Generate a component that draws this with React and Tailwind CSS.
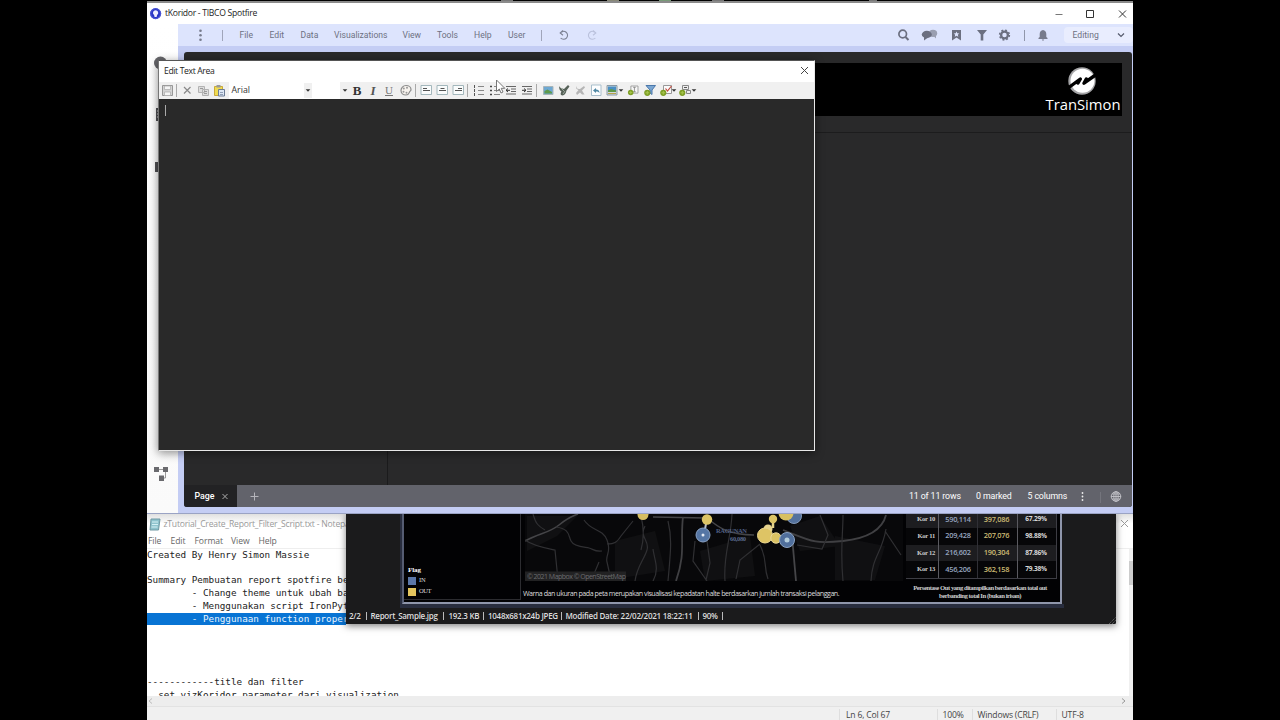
import React from "react";

const UI = "font-['Open_Sans','Noto_Sans',sans-serif]";
const ROBOTO = "font-['Roboto',sans-serif]";

function Icon({ w = 16, h = 16, className = "", children }) {
  return (
    <svg width={w} height={h} viewBox={`0 0 ${w} ${h}`} className={`shrink-0 ${className}`} fill="none">
      {children}
    </svg>
  );
}

function TitleBar() {
  return (
    <div className={`flex h-[21px] shrink-0 items-center bg-white text-[#222] ${UI}`}>
      <Icon w={18} h={18}>
        <circle cx="8.600" cy="8.600" r="5.600" fill="#2a35c4" />
        <circle cx="8.600" cy="8.600" r="4.900" stroke="#5b66dc" strokeWidth=".8" />
        <path d="M8.600 5.200a2.700 2.700 0 0 1 1.500 4.900l-.5 1.900h-2l-.5-1.900a2.700 2.700 0 0 1 1.500-4.900z" fill="#eef" />
      </Icon>
      <span className="w-[300px] text-[8.600px] leading-none tracking-[-0.280px] whitespace-nowrap">tKoridor - TIBCO Spotfire</span>
      <div className="ml-auto flex items-center">
        <Icon w={32} h={12}><path d="M8.500 6.500h7" stroke="#777" /></Icon>
        <Icon w={32} h={12}><path d="M7.500 2.500h7v7h-7z" stroke="#333" /></Icon>
        <Icon w={22} h={12}><path d="M8 2.500l7 7M15 2.500l-7 7" stroke="#333" /></Icon>
      </div>
    </div>
  );
}

const menu = [
  ["File", "w-[30px]"],
  ["Edit", "w-[31px]"],
  ["Data", "w-[33.500px]"],
  ["Visualizations", "w-[68.500px]"],
  ["View", "w-[34.500px]"],
  ["Tools", "w-[37px]"],
  ["Help", "w-[34px]"],
  ["User", "w-[31.500px]"],
];

function MenuBar() {
  return (
    <div className={`flex h-[22px] shrink-0 items-center bg-[#dde4fd] text-[#6d7182] ${ROBOTO}`}>
      <Icon w={61.500} h={22}>
        <g fill="#777b8c">
          <circle cx="22.500" cy="6.800" r="1.300" />
          <circle cx="22.500" cy="11.300" r="1.300" />
          <circle cx="22.500" cy="15.800" r="1.300" />
        </g>
        <path d="M44.500 6v11" stroke="#a0a5ba" />
      </Icon>
      <div className="flex text-[8.600px] leading-none">
        {menu.map(([t, w]) => (
          <span key={t} className={`${w} whitespace-nowrap`}>{t}</span>
        ))}
      </div>
      <Icon w={70} h={22}>
        <path d="M1.500 6v11" stroke="#a0a5ba" />
        <path d="M20.300 9a4 4 0 1 1 .3 5M23 6.500l-2.800 2.500 2.800 2.200" stroke="#7b8092" strokeWidth="1.100" />
        <path d="M55.700 9a4 4 0 1 0-.3 5M53 6.500l2.800 2.500-2.800 2.200" stroke="#bac1dc" strokeWidth="1.100" />
      </Icon>
      <div className="ml-auto flex items-center">
        <Icon w={166} h={22}>
          <g transform="translate(-1 -.5)">
            <circle cx="5.700" cy="10.500" r="3.800" stroke="#6b6f80" strokeWidth="1.700" />
            <path d="M8.500 13.500l3 3" stroke="#6b6f80" strokeWidth="1.900" />
            <ellipse cx="36" cy="9.800" rx="4.200" ry="3.600" fill="#9a9fb1" />
            <path d="M36 12l3 3v-4z" fill="#9a9fb1" />
            <ellipse cx="29.800" cy="11" rx="5" ry="3.700" fill="#6b6f80" />
            <path d="M27 13v4l4-3z" fill="#6b6f80" />
            <path d="M55 6.500h9v10.500l-4.500-3-4.500 3z" fill="#6b6f80" />
            <path d="M59.500 8l.8 1.800 2 .2-1.500 1.300.5 2-1.800-1-1.800 1 .5-2-1.500-1.300 2-.2z" fill="#dde4fd" />
            <path d="M80 6.500h10l-3.700 4.500v6h-2.600v-6z" fill="#6b6f80" />
            <circle cx="107.500" cy="11.500" r="3.400" stroke="#6b6f80" strokeWidth="2.300" />
            <circle cx="107.500" cy="11.500" r="4.900" stroke="#6b6f80" strokeWidth="1.500" strokeDasharray="1.925 1.925" />
            <path d="M127.500 6.500v11" stroke="#9096aa" />
            <path d="M141.500 15.500v-1l1.200-1v-3c0-2.500 1.400-3.600 3.300-4 1.900.4 3.300 1.500 3.300 4v3l1.200 1v1zM144.700 16h2.600l-1.300 1.500z" fill="#777b8c" />
          </g>
        </Icon>
        <div className="flex h-4 w-[69px] items-center rounded-sm bg-[#e9edfe] pl-[8.500px]">
          <span className="w-[42px] text-[8.600px] leading-none">Editing</span>
          <Icon w={12} h={10}><path d="M3 3.500l3 3 3-3" stroke="#555a6c" strokeWidth="1.200" /></Icon>
        </div>
      </div>
    </div>
  );
}

function Rail() {
  return (
    <div className="flex w-[31px] shrink-0 flex-col bg-gradient-to-b from-white to-[#fafafa]">
      <Icon w={31} h={488}>
        <circle cx="13.500" cy="39" r="6.500" fill="#66666a" />
        <path d="M9 84h4v13h-4z" fill="#505054" />
        <path d="M10 87h3M10 90h3M10 93h3" stroke="#ddd" />
        <path d="M8 138h5v10H8z" fill="#505054" />
        <path d="M12 445.500h4M18.500 448v6h-2" stroke="#999" />
        <path d="M7 443h5v5H7zM16 443h5v5h-5zM12 451.500h5v5.500h-5z" fill="#6a6a6e" />
      </Icon>
    </div>
  );
}

function Logo() {
  return (
    <div className="flex h-[53px] items-center justify-end bg-black">
      <div className="flex w-[78px] flex-col items-center pt-px text-white">
        <Icon w={30} h={28} className="ml-[-3px]">
          <circle cx="15" cy="14" r="13.700" fill="#a4a4a6" />
          <circle cx="15.500" cy="13.700" r="12" fill="#fff" />
          <path d="M2.500 20L13.300 12l-2.300 4M28.500 8L17 16.200l2.300-4.200" stroke="#000" strokeWidth="3.400" strokeLinejoin="round" strokeLinecap="round" />
        </Icon>
        <span className="text-[14.800px] leading-[18px] whitespace-nowrap font-['Open_Sans',sans-serif]">TranSimon</span>
      </div>
    </div>
  );
}

function FooterBar() {
  return (
    <div className={`flex h-[22px] shrink-0 items-center bg-[#62636b] pt-px text-[8.800px] leading-none text-white ${ROBOTO}`}>
      <div className="-mt-px flex h-[22px] w-[53px] items-center bg-[#222224] pt-px pl-[10.500px]">
        <span className="w-[25px] font-medium">Page</span>
        <Icon w={11} h={11}><path d="M2.500 3l5 5M7.500 3l-5 5" stroke="#aaa" /></Icon>
      </div>
      <Icon w={34} h={22}><path d="M13.500 10.500h8M17.500 6.500v8" stroke="#b5b5bb" /></Icon>
      <div className="ml-auto flex items-center">
        <span className="w-[67px] tracking-[-0.120px] whitespace-nowrap">11 of 11 rows</span>
        <span className="w-[51.500px] tracking-[-0.120px] whitespace-nowrap">0 marked</span>
        <span className="w-[46.500px] tracking-[-0.120px] whitespace-nowrap">5 columns</span>
        <Icon w={58} h={22}>
          <g fill="#eee"><circle cx="8.500" cy="7" r=".9" /><circle cx="8.500" cy="10.500" r=".9" /><circle cx="8.500" cy="14" r=".9" /></g>
          <path d="M26.500 6v11" stroke="#74757d" />
          <g stroke="#c4c4ca" strokeWidth=".9">
            <circle cx="42" cy="10.500" r="4.800" />
            <ellipse cx="42" cy="10.500" rx="2.200" ry="4.800" />
            <path d="M37 10.500h10M42 5.500v10M38 8h8M38 13h8" />
          </g>
        </Icon>
      </div>
    </div>
  );
}

function SpotfireWindow() {
  return (
    <div className="absolute top-[1px] left-[147px] flex h-[513px] w-[986px] flex-col overflow-hidden border-t-2 border-b border-[#8b8b8b] border-b-[#9aa3c4] bg-[#c4cdf4]">
      <TitleBar />
      <div className="flex min-h-0 flex-1">
        <Rail />
        <div className="flex min-w-0 flex-1 flex-col">
          <MenuBar />
          <div className="mt-[6px] mr-[1px] mb-[6px] ml-[6px] flex min-h-0 flex-1 flex-col overflow-hidden rounded-[3px] bg-[#29292a]">
            <div className="pt-[11px] pr-[10px] pl-[10px]"><Logo /></div>
            <div className="mt-4 h-px shrink-0 bg-[#1c1c1d]" />
            <div className="ml-[203px] flex-1 border-l border-[#1b1b1c]" />
            <FooterBar />
          </div>
        </div>
      </div>
    </div>
  );
}

function Sep({ className = "mr-[2px]" }) {
  return <div className={`ml-[1px] h-[13px] w-px shrink-0 bg-[#a9a9a9] ${className}`} />;
}

function Caret({ className = "" }) {
  return <Icon w={8} h={16} className={className}><path d="M1.700 7.200h4.600l-2.300 2.500z" fill="#333" /></Icon>;
}

function Align({ d }) {
  return (
    <Icon>
      <path d="M3 3.500h10.500v9H3z" fill="#fafcfc" stroke="#9ab0b5" strokeWidth=".9" />
      <path d={d} stroke="#555" />
    </Icon>
  );
}

function GreenDot() {
  return (
    <>
      <circle cx="5.300" cy="10.800" r="3.100" fill="#7d9e25" />
      <path d="M3.500 10.800h3.600M5.300 9v3.600" stroke="#a8c64e" />
    </>
  );
}

function Toolbar() {
  return (
    <div className="flex h-[17px] shrink-0 items-center bg-[#f0f0f0] pb-px text-[#4a4a4a]">
      <Icon>
        <path d="M3.500 3.500h10v10h-10z" fill="#d4d4d4" stroke="#979797" />
        <path d="M5.500 4h6v3.500h-6zM5.500 10h6v3.500h-6z" fill="#f6f6f6" stroke="#aaa" strokeWidth=".7" />
      </Icon>
      <Sep />
      <Icon><path d="M5 5l6.500 6.500M11.500 5L5 11.500" stroke="#888" strokeWidth="1.200" /></Icon>
      <Icon>
        <path d="M3.500 4.500h6v6h-6zM7.500 7.500h6v6h-6z" fill="#ddd" stroke="#b2b2b2" />
        <path d="M5 6.500h3M9 9.500h3M9 11.500h3" stroke="#999" />
      </Icon>
      <Icon>
        <path d="M3.500 4.500h8v9h-8z" fill="#f0dc52" stroke="#c9a93a" />
        <path d="M5.500 3h4v2.500h-4z" fill="#999" />
        <path d="M7.500 7.500h6v6.500h-6z" fill="#dce6f3" stroke="#6c7c95" />
        <path d="M9 10.500h3M9 12.500h3" stroke="#7c8ca5" strokeWidth=".8" />
      </Icon>
      <div className="ml-[2px] -mb-px flex h-[17px] w-[83px] items-center bg-white pl-[2.500px]">
        <span className={`w-[72px] text-[8.800px] leading-none text-[#333] ${UI}`}>Arial</span>
        <div className="h-[15px] w-2 bg-[#f0f0f0]"><Caret className="-mt-px" /></div>
      </div>
      <div className="-mb-px h-[17px] w-[28px] bg-white" />
      <Caret className="ml-[1px]" />
      <span className="w-4 text-center font-['Liberation_Serif',serif] text-[13px] leading-none font-bold text-[#333]">B</span>
      <span className="w-4 text-center font-['Liberation_Serif',serif] text-[13px] leading-none font-bold italic text-[#555]">I</span>
      <span className="w-4 text-center font-['Liberation_Serif',serif] text-[11px] leading-none text-[#777] underline">U</span>
      <Icon className="ml-[1px]">
        <path d="M8 3.500c3 0 5 1.800 5 4 0 1.500-1 1.500-1.500 2.500S11 13 8 13s-5-2-5-4.500 2-5 5-5z" fill="#f7f3ee" stroke="#8c8c8c" strokeWidth="1.200" />
        <g fill="#999"><circle cx="5.800" cy="6.500" r="1" /><circle cx="9" cy="5.800" r="1" /><circle cx="5.500" cy="9.800" r="1" /><circle cx="8.500" cy="10.800" r="1" /></g>
      </Icon>
      <Sep />
      <Align d="M5 6.500h4M5 8.500h7" />
      <Align d="M6.500 6.500h4M5 8.500h7" />
      <Align d="M8 6.500h4M5 8.500h7" />
      <Sep className="mr-[3px]" />
      <Icon><path d="M7 4.500h6M7 8.500h6M7 12.500h6" stroke="#888" strokeWidth="1.100" /><path d="M3.500 3v3M3.500 7v3M3.500 11v3" stroke="#555" /></Icon>
      <Icon><path d="M7 4.500h6M7 8.500h6M7 12.500h6" stroke="#888" strokeWidth="1.100" /><path d="M3 4.500h2M3 8.500h2M3 12.500h2" stroke="#444" strokeWidth="1.500" /></Icon>
      <Icon><path d="M3 4.500h10M8 7h5M8 9.500h5M3 12h10" stroke="#666" strokeWidth="1.200" /><path d="M3 8.300h4M5 6.500L3 8.300l2 1.700" stroke="#333" /></Icon>
      <Icon><path d="M3 4.500h10M8 7h5M8 9.500h5M3 12h10" stroke="#666" strokeWidth="1.200" /><path d="M3 8.300h4M5 6.500l2 1.800-2 1.700" stroke="#333" /></Icon>
      <Sep className="mr-[3px]" />
      <Icon>
        <path d="M3.500 4.500h9.500v8H3.500z" fill="#6da8d3" stroke="#a8b4b8" />
        <path d="M4.500 11.500V9l3-1.500 4.500 2.500v1.500z" fill="#5f9a4c" />
      </Icon>
      <Icon>
        <path d="M3 4c1 2 2.500 2.500 5 3l4-4 1.500 1.500-3 4c-.5 3-2 4.500-4 5-2.500-.5-2-2.500-1-4C4 9 3 7 3 4z" fill="#566158" />
        <path d="M5 6l3 3M7 12l2-3" stroke="#9aa79b" />
      </Icon>
      <Icon>
        <path d="M4 4c1 3 2 3 4 3l4-3 1 1.500-3 3 2.500 4H10l-2-2-3 2.500-1-2L6.500 8C4 7 4 6 4 4z" fill="#b5b5b5" />
      </Icon>
      <Icon>
        <path d="M3.500 3h9.500v10.500H3.500z" fill="#fdfeff" stroke="#a9bfcc" />
        <path d="M5 8.500l3-2.500v1.500c2 0 3.500 1 3.500 3.500-1-1.200-2-1.500-3.500-1.500V11z" fill="#4f87a4" />
      </Icon>
      <Icon>
        <path d="M3 3.500h10v9.500H3z" fill="#d2d9de" stroke="#8a9aa5" />
        <path d="M4 4.500h8v5H4z" fill="#4a8fc4" />
        <path d="M4 8.500l3-1.500 5 1.500v1.500H4z" fill="#5e9948" />
        <path d="M4 11.500h8" stroke="#b7a44a" />
      </Icon>
      <Caret className="-ml-[3px]" />
      <Icon w={18} className="-ml-[1.500px] pl-[2px]">
        <path d="M5.500 3.500h8v8h-8z" fill="#f6f6f6" stroke="#999" />
        <path d="M9.500 5v5M8 5h3M8 10h3" stroke="#777" strokeWidth=".8" />
        <GreenDot />
      </Icon>
      <Icon>
        <path d="M4 3.500h9.500L10 8v4.500l-2-1.500V8z" fill="#7aa6d2" stroke="#4b77aa" />
        <GreenDot />
      </Icon>
      <Icon>
        <path d="M5.500 3.500h8v8h-8z" fill="#fafafa" stroke="#999" />
        <path d="M7.500 6.500l2 2.500 4-5" stroke="#c34a3f" strokeWidth="1.200" />
        <GreenDot />
      </Icon>
      <Caret className="-ml-[3.500px]" />
      <Icon className="-mr-[1px] -ml-[1px]">
        <path d="M5.500 3.500h6v4h-6zM9.500 8.500h4v3h-4z" fill="#eee" stroke="#888" />
        <path d="M7 5.500h3" stroke="#555" />
        <GreenDot />
      </Icon>
      <Caret className="-ml-[2px]" />
    </div>
  );
}

function EditDialog() {
  return (
    <div className="absolute top-[60px] left-[158px] flex h-[391px] w-[657px] flex-col border border-[#e8e8e8] border-t-[#555] border-l-[#777] bg-[#292929] shadow-[0_2px_9px_rgba(0,0,0,0.45)]">
      <div className={`flex h-[21px] shrink-0 items-center justify-between bg-white pr-[4px] pb-px pl-[5px] ${UI}`}>
        <span className="pt-px text-[8.600px] leading-none tracking-[-0.360px] text-[#222]">Edit Text Area</span>
        <Icon w={11} h={11} className="-mt-px"><path d="M2 2l7 7M9 2l-7 7" stroke="#444" /></Icon>
      </div>
      <Toolbar />
      <div className="flex-1 pt-[6px] pl-[6px]"><div className="h-[11px] w-px bg-[#aaa]" /></div>
    </div>
  );
}

function NotepadWindow() {
  const bar = "flex h-full items-center border-l border-[#dedede] pt-px whitespace-nowrap";
  return (
    <div className="absolute top-[513px] left-[147px] flex h-[207px] w-[986px] flex-col overflow-hidden bg-white">
      <div className={`flex h-[21px] shrink-0 items-center bg-gradient-to-b from-[#ddd] via-white to-white text-[#999] ${UI}`}>
        <Icon w={16.500} h={16}>
          <path d="M4 3h9l-1.500 11H3z" fill="#8ec3cd" stroke="#6f98a2" />
          <path d="M5 6h6M5 8.500h6M4.500 11h6" stroke="#d5f0f4" />
        </Icon>
        <span className="text-[8.600px] leading-[12px] tracking-[-0.200px] whitespace-nowrap">zTutorial_Create_Report_Filter_Script.txt - Notepad</span>
        <Icon w={14} h={11} className="ml-auto"><path d="M2 2l7 7M9 2l-7 7" stroke="#999" /></Icon>
      </div>
      <div className={`flex h-[15px] shrink-0 items-center border-b border-[#eee] pl-[1px] text-[8.600px] leading-none tracking-[-0.080px] text-[#666] ${UI}`}>
        <span className="w-[22.500px]">File</span>
        <span className="w-6">Edit</span>
        <span className="w-[36.500px]">Format</span>
        <span className="w-[27.500px]">View</span>
        <span>Help</span>
      </div>
      <div className="flex h-[147px] shrink-0">
        <div className="h-full flex-1 overflow-hidden font-['DejaVu_Sans_Mono',monospace] text-[9.300px] leading-[12.700px] whitespace-pre text-[#222]">
          <div>Created By Henry Simon Massie</div>
          <div> </div>
          <div>Summary Pembuatan report spotfire be</div>
          <div>{"        - Change theme untuk ubah ba"}</div>
          <div>{"        - Menggunakan script IronPyt"}</div>
          <div className="w-[199px] overflow-hidden bg-[#0874d4] text-[#e9f4ff]">{"        - Penggunaan function proper"}</div>
          <div> </div>
          <div> </div>
          <div> </div>
          <div> </div>
          <div>------------title dan filter</div>
          <div>{"  set vizKoridor parameter dari visualization"}</div>
        </div>
        <div className="w-1 bg-[#f0f0f0] pt-[12px]"><div className="h-6 bg-[#ccc]" /></div>
      </div>
      <div className="flex h-[10px] shrink-0 items-center justify-between bg-[#ededed] px-[1px]">
        <Icon w={6} h={8}><path d="M4 1.500L1 4l3 2.500" stroke="#bbb" /></Icon>
        <Icon w={13} h={8}><path d="M3 1.500L6 4 3 6.500" stroke="#999" /></Icon>
      </div>
      <div className={`flex h-[14px] shrink-0 items-center justify-end border-t border-[#e2e2e2] bg-[#f0f0f0] pt-[2px] text-[8.600px] leading-none tracking-[-0.180px] text-[#444] ${UI}`}>
        <span className={`${bar} w-[98px] pl-[6px]`}>Ln 6, Col 67</span>
        <span className={`${bar} w-[35px] pl-[4.500px]`}>100%</span>
        <span className={`${bar} w-[84px] pl-[4.500px]`}>Windows (CRLF)</span>
        <span className={`${bar} w-[77px] pl-[4.500px]`}>UTF-8</span>
      </div>
    </div>
  );
}

function RoadMap() {
  return (
    <svg width="378" height="67" viewBox="525 513 378 67" className="shrink-0 bg-[#08080a]">
      <g fill="#101012">
        <path d="M527 515h50l-20 20-30 15zM615 540l40-10 10 40-50 8zM700 550l50-15 5 40-50 5zM790 525l30-10 20 30-40 5zM835 535l50 10-10 34h-40z" />
      </g>
      <g fill="none" stroke="#303033" strokeWidth="1.200">
        <path d="M525 540c15-8 24-8 34-16s12-8 19-11" stroke="#454548" strokeWidth="1.600" />
        <path d="M525 539c8 6 20 8 30 10l3 30M533 513c3 10 5 12 12 16M556 526c14 2 12 8 15 14s14 6 18 7 6 4 13 3M584 519c8 12 18 8 23 20s-2 15 0 22l4 18M607 543c8 0 10-2 14-8l12-15M645 525c-6 12 5 14 2 24s-10 16-12 31M641 515c2 8 4 20 0 34M599 561l-5 12 3 7" />
        <path d="M653 516l53 1c10 5 14 16 48 17" stroke="#454548" strokeWidth="1.500" />
        <path d="M683 516c-3 24 3 36-7 64" stroke="#404043" strokeWidth="1.800" />
        <path d="M668 520c4 16 3 28 0 60M653 548c1 10 7 20 0 32M695 540l-2 20 14 20M707 540l3 22-4 17M732 513c-1 25-9 41-7 67M760 543l-20 16-4 19M760 544c8 16 3 20 8 34" />
        <path d="M792 535l4 45" stroke="#454548" strokeWidth="1.800" />
        <path d="M783 529c30 12 32 14 60 11s40-14 43-26" stroke="#404043" strokeWidth="1.800" />
        <path d="M843 514c0 20-3 35 0 66M886 528c-4 24-14 28-15 52M885 530l16 24M820 514l8 20-6 14-25-4" />
      </g>
      <g>
        <circle cx="643" cy="513.500" r="5.500" fill="#d6be62" />
        <path d="M707 518l-3 15" stroke="#b7bfcc" strokeWidth="2" />
        <circle cx="707" cy="518.500" r="5.200" fill="#dcc466" />
        <circle cx="703" cy="534" r="7" fill="#5576a5" stroke="#8ba3c6" />
        <circle cx="703" cy="534" r="1.500" fill="#e8edf5" />
        <circle cx="794" cy="515" r="7.500" fill="#54729e" stroke="#8298b8" />
        <circle cx="786" cy="512" r="7.500" fill="#d8c062" />
        <path d="M773 517v10" stroke="#e6d48c" strokeWidth="2.500" />
        <circle cx="773" cy="518" r="4.200" fill="#dcc466" />
        <circle cx="768" cy="528" r="4.500" fill="#e5d38e" />
        <circle cx="765" cy="534.500" r="7.500" fill="#dec465" stroke="#ead58e" />
        <circle cx="776" cy="537" r="5.200" fill="#dac263" stroke="#e8d79a" />
        <circle cx="787" cy="539" r="7.500" fill="#506f9c" stroke="#8ca4c4" />
        <circle cx="787" cy="539" r="2.500" fill="#b3cddd" />
      </g>
      <g fontFamily="Liberation Serif, serif" fontSize="6.500" fontWeight="bold">
        <text x="716" y="532" fill="#4f5f83" textLength="31">RAGUNAN</text>
        <text x="730" y="540" fill="#5b6b8e" textLength="16">60,080</text>
      </g>
      <path d="M525 570.500h101v9.500H525z" fill="#222223" />
      <text x="527" y="577.800" fill="#6c6c6f" fontFamily="Open Sans, sans-serif" fontSize="7" textLength="99">© 2021 Mapbox © OpenStreetMap</text>
    </svg>
  );
}

const rows = [
  ["Kor 10", "590,114", "397,086", "67.29%"],
  ["Kor 11", "209,428", "207,076", "98.88%"],
  ["Kor 12", "216,602", "190,304", "87.86%"],
  ["Kor 13", "456,206", "362,158", "79.38%"],
];

function ReportTable() {
  return (
    <div className="mt-[-3px] flex w-[151px] flex-col border-r border-b border-[#3d3d44] text-[8px] leading-none font-['Open_Sans',sans-serif]">
      {rows.map((r, i) => (
        <div key={r[0]} className={`flex h-[16.800px] items-center ${i % 2 ? "bg-[#060608]" : "bg-[#1d1d20]"}`}>
          <span className="w-[32px] pr-[3px] text-right font-['Liberation_Serif',serif] text-[6.600px] font-bold tracking-[-0.250px] text-[#ccc]">{r[0]}</span>
          <span className="flex h-full w-[39px] items-center justify-center border-l border-[#5a5a60] text-[7.400px] font-semibold tracking-[-0.250px] text-[#98a7c0]">{r[1]}</span>
          <span className="flex h-full w-[40px] items-center justify-center border-l border-[#303036] pr-[2px] text-[7.400px] font-semibold tracking-[-0.250px] text-[#cdbc74]">{r[2]}</span>
          <span className="flex h-full w-[39px] items-center justify-center border-l border-[#5a5a60] pr-[2px] text-[6.600px] font-bold tracking-[-0.200px] text-[#d8d8d8]">{r[3]}</span>
        </div>
      ))}
    </div>
  );
}

function ImageViewer() {
  return (
    <div className="absolute top-[513px] left-[346px] flex h-[111px] w-[770px] flex-col bg-[#1b1b1c] shadow-[0_2px_7px_rgba(0,0,0,0.5)]">
      <div className="ml-[54px] flex h-[95px] w-[664px] shrink-0 border-b-4 border-l-2 border-[#282d3e]">
        <div className="flex h-[91px] w-[660px] border-r-2 border-b-2 border-l-2 border-[#8f96ab] border-l-[#555c72] bg-[#020204] pt-px">
          <div className="mb-[2px] flex w-[117px] flex-col justify-end border-r border-b border-[#2c2c30] pb-[2px] pl-[4px] font-['Liberation_Serif',serif] text-[7px] leading-none font-bold tracking-[-0.100px] text-white">
            <span className="mb-px">Flag</span>
            <div className="flex h-[11px] items-center gap-[3px]"><i className="h-2 w-2 bg-[#5b77a8]" /><span className="text-[6.500px] font-normal text-[#ddd]">IN</span></div>
            <div className="flex h-[11px] items-center gap-[3px]"><i className="h-2 w-2 bg-[#e3c55e]" /><span className="text-[6.500px] font-normal tracking-[-0.500px] text-[#ddd]">OUT</span></div>
          </div>
          <div className="flex w-[385px] flex-col pl-[4px]">
            <RoadMap />
            <span className="ml-[-2px] pt-[8px] text-[7.100px] leading-[9px] tracking-[-0.470px] whitespace-nowrap text-[#ddd] font-['Open_Sans',sans-serif]">
              Warna dan ukuran pada peta merupakan visualisasi kepadatan halte berdasarkan jumlah transaksi pelanggan.
            </span>
          </div>
          <div className="flex w-[151px] flex-col">
            <ReportTable />
            <div className="pt-[5px] pr-[3px] text-center font-['Liberation_Serif',serif] text-[6.700px] leading-[8.200px] font-bold tracking-[-0.480px] whitespace-nowrap text-[#ccc]">
              Persentase Out yang ditampilkan berdasarkan total out<br />berbanding total In (bukan irisan)
            </div>
          </div>
        </div>
      </div>
      <div className={`flex flex-1 items-center pl-[3px] text-[8px] leading-none font-semibold tracking-[-0.280px] whitespace-nowrap text-[#ddd] ${UI}`}>
        <span className="w-[16.500px]">2/2</span>
        <span className="w-[77.500px] border-l border-[#bbb] pl-[4px]">Report_Sample.jpg</span>
        <span className="w-[39.500px] border-l border-[#bbb] pl-[4.500px]">192.3 KB</span>
        <span className="w-[78px] border-l border-[#bbb] pl-[4.500px]">1048x681x24b JPEG</span>
        <span className="w-[137px] border-l border-[#bbb] pl-[4px] tracking-[-0.250px]">Modified Date: 22/02/2021 18:22:11</span>
        <span className="w-[25px] border-x border-[#bbb] pl-[4px]">90%</span>
        <Icon w={9} h={9} className="mt-[7px] ml-auto"><path d="M2 9l7-7M5 9l4-4M8 9l1-1" stroke="#777" strokeDasharray="1 1" /></Icon>
      </div>
    </div>
  );
}

export default function App() {
  return (
    <main className="relative h-[720px] w-[1280px] overflow-hidden bg-black">
      <NotepadWindow />
      <ImageViewer />
      <SpotfireWindow />
      <EditDialog />
      <svg className="absolute top-[79px] left-[495px]" width="12" height="17" viewBox="0 0 12 17">
        <path d="M1.500 1v11.500l2.800-2.500 1.700 4 2-1-1.800-3.700h3.600z" fill="#fff" stroke="#777" />
      </svg>
      <div className="absolute top-0 left-[501px] flex w-[376px]">
        <i className="h-px w-3 bg-[#777]" />
        <i className="ml-[94px] h-px w-3 bg-[#887]" />
        <i className="ml-[40px] h-px w-3 bg-[#797]" />
        <i className="ml-[41px] h-px w-3 bg-[#777]" />
        <i className="ml-auto h-px w-2 bg-[#777]" />
      </div>
    </main>
  );
}
